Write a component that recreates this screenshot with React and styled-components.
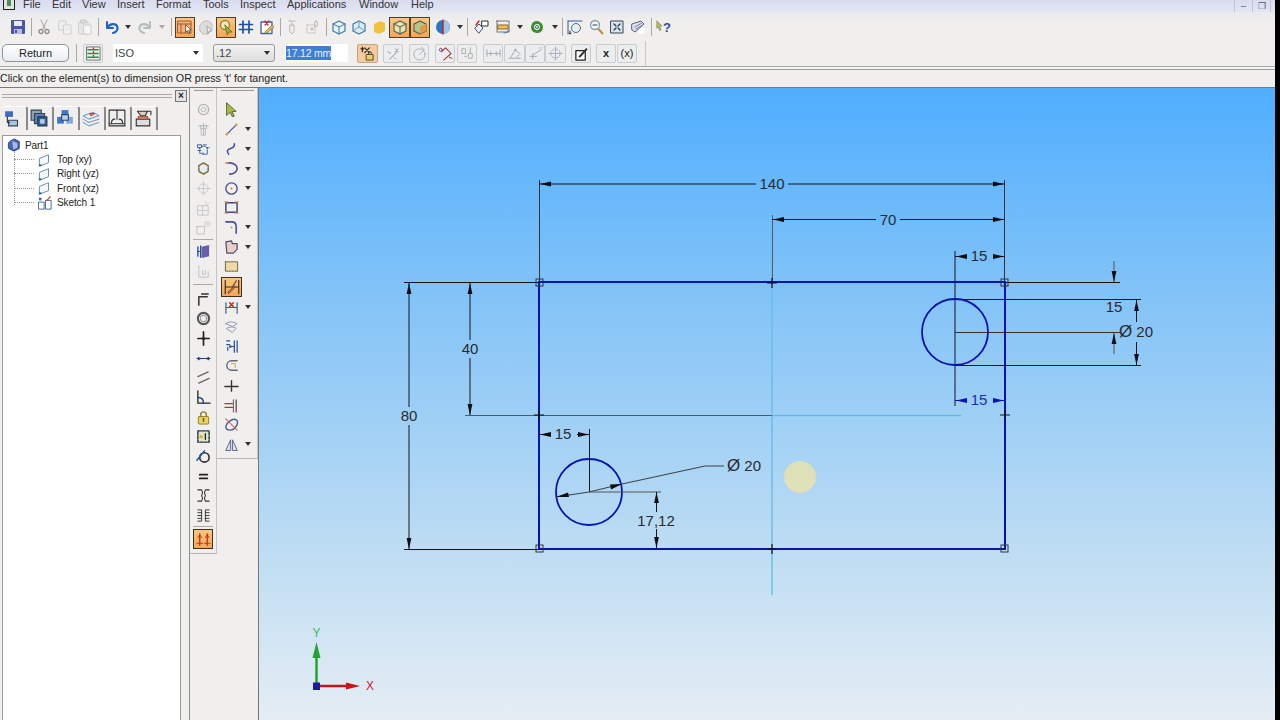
import React from "react";
import styled, { createGlobalStyle } from "styled-components";

const GlobalStyle = createGlobalStyle`
  html, body { margin: 0; padding: 0; background: #000; }
  body { font-family: "Liberation Sans", Arial, sans-serif; overflow: hidden; }
`;

const Icon = ({ children, size = 16 }) => (
  <svg width={size} height={size} viewBox="0 0 16 16" fill="none" strokeLinecap="round" strokeLinejoin="round">
    {children}
  </svg>
);

// toolbar and strip drawings, keyed by name
const G = {
  save: <><rect x="1" y="1" width="14" height="14" rx="1" fill="#4b55a8" /><rect x="4" y="2" width="8" height="5" fill="#e8e8f2" /><rect x="4" y="10" width="8" height="5" fill="#b9bddb" /><rect x="5" y="11" width="2" height="3" fill="#4b55a8" /></>,
  cut: <><path d="M5 1l4 9M11 1L7 10" stroke="#a5a5a5" /><circle cx="5" cy="12.5" r="2" stroke="#8f8f8f" strokeWidth="1.3" /><circle cx="11" cy="12.5" r="2" stroke="#8f8f8f" strokeWidth="1.3" /></>,
  copy: <><path d="M2 2h7v9H2z" fill="#eee" stroke="#d0d0d0" /><path d="M7 6h7v9H7z" fill="#f3f3f3" stroke="#cfcfcf" /><path d="M9 9h3M9 11h3" stroke="#ddd" /></>,
  paste: <><rect x="2" y="3" width="9" height="12" fill="#e6e6e6" stroke="#cfcfcf" /><rect x="7" y="6" width="7" height="9" fill="#f6f6f6" stroke="#cfcfcf" /><rect x="4" y="1" width="5" height="3" fill="#ddd" stroke="#c8c8c8" /></>,
  undo: <><path d="M3 3v6h6" stroke="#1f63c8" strokeWidth="2" /><path d="M3.5 8.5C6 4 13 4 13.5 9c.2 2.5-2 4.5-4.5 5" stroke="#1f63c8" strokeWidth="2.2" /></>,
  redo: <><path d="M13 3v6H7" stroke="#b7bdbf" strokeWidth="2" /><path d="M12.5 8.5C10 4 3 4 2.5 9c-.2 2.5 2 4.5 4.5 5" stroke="#b7bdbf" strokeWidth="2.2" /></>,
  selFace: <><rect x="1" y="2" width="13" height="12" fill="#f6b27a" stroke="#a3562c" /><path d="M1 5h13M4 5v9" stroke="#a3562c" /><path d="M9 6l5 5-2.4.2 1.2 3-1.3.5-1.2-3L9 13z" fill="#fff" stroke="#333" strokeWidth=".7" /></>,
  selGhost: <><path d="M2 6l4-4h5l3 3v6l-4 4H5l-3-3z" fill="#ddd" stroke="#bbb" /><path d="M9 7l5 5-3 .2-1 2.5z" fill="#eee" stroke="#aaa" /></>,
  selPick: <><circle cx="7" cy="6" r="4.5" fill="#f7e5b5" stroke="#8c8a3a" strokeWidth="1.4" /><path d="M7 6l7 7-3.3.2-1.2 2.4z" fill="#9aae3c" stroke="#4f5f20" strokeWidth=".7" /></>,
  hash: <path d="M5 2v12M11 2v12M1.5 5.5h13M1.5 10.5h13" stroke="#1d4fa8" strokeWidth="1.7" />,
  sketch: <><rect x="2" y="3" width="11" height="11.5" fill="#fff" stroke="#3d5fb0" strokeWidth="1.3" /><path d="M6 2l3 4M10 2L6 6" stroke="#c62828" strokeWidth="1.3" /><path d="M6 13l7-7 2 2-7 6z" fill="#e8b050" stroke="#8d6a2a" strokeWidth=".6" /></>,
  faintA: <><path d="M7 2v4M5 6h4v7l-2 2-2-2z" stroke="#b8b8b8" /><path d="M4 2h2M9 2h1" stroke="#aaa" /></>,
  faintB: <><rect x="2" y="6" width="8" height="8" stroke="#c4c4c4" strokeDasharray="2 1" /><circle cx="7" cy="10" r="1.4" fill="#bbb" /><path d="M11 2c2 0 2 6 0 6s-2-6 0-6z" stroke="#b0b0b0" /></>,
  cubeA: <><path d="M2 5l6-3 6 3v7l-6 3-6-3z" fill="#e9f3fa" stroke="#3c7ba8" strokeWidth="1.2" /><path d="M2 5l6 3 6-3M8 8v7" stroke="#3c7ba8" /></>,
  cubeB: <><path d="M2 5l6-3 6 3v7l-6 3-6-3z" fill="#dcecf7" stroke="#3c7ba8" strokeWidth="1.2" /><path d="M8 8V2M8 8l6 4M8 8l-6 4" stroke="#6b9fc4" /></>,
  cubeY: <path d="M3 5l6-3 5 2v8l-6 3-5-2z" fill="#f2c23c" />,
  cubeC: <><path d="M2 5l6-3 6 3v7l-6 3-6-3z" fill="#e9e6a8" stroke="#4d5a5a" strokeWidth="1.1" /><path d="M2 5l6 3 6-3M8 8v7" stroke="#4d5a5a" /></>,
  cubeD: <><path d="M2 5l6-3 6 3v7l-6 3-6-3z" fill="#b7c48a" stroke="#4d5a5a" strokeWidth="1.1" /><path d="M8 8l6-3v7l-6 3z" fill="#e09a4a" /></>,
  sphere: <><circle cx="8" cy="8" r="7" fill="#2778c4" /><path d="M8 1a7 7 0 0 1 0 14z" fill="#9cc6e8" /><path d="M8 1v14" stroke="#d11919" strokeWidth="1.4" /></>,
  rotate: <><path d="M2 9l4-4 4 4-4 5z" fill="#eef" stroke="#456" /><path d="M9 2h6v5H9z" fill="#fff" stroke="#333" /><path d="M6 2L3 6" stroke="#c22" strokeWidth="1.4" /></>,
  display: <><rect x="2" y="2" width="12" height="11" stroke="#666" strokeDasharray="2 1" /><rect x="3" y="6" width="10" height="4" fill="#e8c060" stroke="#8a6b20" /><path d="M9 14c3 0 4-1 5-3" stroke="#3f7fc0" strokeWidth="1.2" /></>,
  spin: <><circle cx="8" cy="8" r="4.5" stroke="#3e8e2c" strokeWidth="3" strokeDasharray="6 2" /><circle cx="8" cy="8" r="1.5" fill="#fff" stroke="#276" /></>,
  zoomBox: <><path d="M1 2h14M1 2v13" stroke="#2f5fa0" /><circle cx="9" cy="9" r="4.5" fill="#dff0f8" stroke="#666" /><path d="M3 12v3M2 14l1 1 1-1" stroke="#333" /></>,
  zoomGlass: <><circle cx="7" cy="6" r="4.5" fill="#eaf6fb" stroke="#7f9db3" strokeWidth="1.3" /><path d="M5 6h4" stroke="#444" /><path d="M10.5 10l4 4.5" stroke="#c08a40" strokeWidth="2" /></>,
  fit: <><rect x="2" y="2" width="12" height="12" fill="#dbe7ef" stroke="#345" /><path d="M5 5l2 2M11 5L9 7M5 11l2-2M11 11L9 9" stroke="#234" strokeWidth="1.2" /></>,
  views: <><path d="M2 5l9-3 3 3-9 8-3-2z" fill="#dde" stroke="#567" /><path d="M5 8l7-4M6 10l7-4" stroke="#789" /><circle cx="12" cy="12" r="3" fill="#fff" /></>,
  help: <><path d="M1 2l5 5-2.5.3L5 11 3.5 11.5 2.5 8 1 9z" fill="#b8c440" stroke="#566" strokeWidth=".5" /><text x="7" y="13" fontFamily="Liberation Sans" fontWeight="700" fontSize="13" fill="#2a50a0">?</text></>,
  grid: <><rect x="1" y="1" width="14" height="14" fill="#f2f2ea" stroke="#667" /><path d="M2 4h12M2 8h12M2 12h12" stroke="#2f8a4a" strokeDasharray="3 1" strokeWidth="1.5" /><path d="M8 2v12" stroke="#c23" strokeDasharray="1 3" strokeWidth="1.5" /></>,
  lockDim: <><path d="M1 3h3M2.5 1v5M5 2l5 5M10 2L5 7" stroke="#222" strokeWidth="1.2" /><rect x="7" y="9" width="7" height="6" fill="#e8d36a" stroke="#444" /><path d="M9 9V7.5a1.5 1.5 0 0 1 3 0V9" stroke="#444" /></>,
  bdA: <><path d="M2 6l3 2M4 14l8-8M10 3l3 3M13 3l-3 3" stroke="#aab" strokeWidth="1.1" /><path d="M8 12l3 2" stroke="#bbb" /></>,
  bdB: <><circle cx="8" cy="9" r="6" stroke="#a8aeb0" /><path d="M8 9l5-5M10 1l3 3" stroke="#a8aeb0" /></>,
  bdC: <><circle cx="3" cy="4" r="1.6" stroke="#7a4a90" /><path d="M4 6l4-4 6 6-8 7" stroke="#a33" strokeWidth="1.1" /><path d="M12 12l3 1" stroke="#555" /></>,
  bdD: <><path d="M2 3h4v5H2zM9 8h4v5H9zM5 11h3M11 2v5" stroke="#a5a9aa" strokeDasharray="2 1" /></>,
  bdE: <><path d="M1 4v7M15 4v7M1 8h14M5 6v4M11 6v4" stroke="#a7adaf" /></>,
  bdF: <><path d="M2 13h12M4 12l5-8 5 5" stroke="#9aa" /><circle cx="9" cy="4" r="1" fill="#899" /><path d="M10 11l3-1" stroke="#bbb" /></>,
  bdG: <><path d="M2 11h7M5 8v6M6 9l8-5" stroke="#a5aaab" /><path d="M12 2h3" stroke="#bbb" /></>,
  bdH: <><circle cx="8" cy="8" r="5" stroke="#aab" strokeDasharray="3 1.5" /><path d="M8 1v14M1 8h14" stroke="#aab" /></>,
  edit: <><rect x="2" y="5" width="10" height="10" fill="#fff" stroke="#222" strokeWidth="1.3" /><path d="M5 11l8-9 1.5 1.5L7 12H5z" fill="#333" /></>,
  target: <><circle cx="8" cy="8" r="5.5" stroke="#b4b4b4" strokeWidth="1.4" /><circle cx="8" cy="8" r="2.4" stroke="#b4b4b4" /></>,
  strutFaint: <><path d="M3 4h10M8 2v12M5 4v3M11 4v3" stroke="#a9b4b6" /><rect x="6" y="7" width="4" height="7" stroke="#bbb" /></>,
  pattern: <><rect x="2" y="3" width="4" height="3" stroke="#2b5aa0" /><path d="M2 9h3M5 12h3M8 3h3M11 6h3M6 4.5h5M4 6v6M12 6v7M11 13H7" stroke="#2b5aa0" strokeDasharray="1.6 1" /></>,
  polyFaint: <><path d="M8 2l5 3v6l-5 3-5-3V5z" fill="#e4ecf0" stroke="#7d6c3c" strokeDasharray="3 1" strokeWidth="1.6" /></>,
  crossFaint: <><circle cx="8" cy="8" r="5" stroke="#c6cacc" /><path d="M8 1v14M1 8h14" stroke="#c6cacc" /></>,
  gridFaint: <><path d="M2 5h11v10H2zM7 5v10M2 10h11" stroke="#c8c8c8" /><path d="M10 1l2 3M14 2l-2 2" stroke="#d0d0d0" /></>,
  dashFaint: <><rect x="1" y="7" width="8" height="8" stroke="#c0c0c0" strokeDasharray="2 1" /><rect x="9" y="1" width="6" height="6" fill="#dedede" /></>,
  extrude: <><path d="M2 3v10M5 2v12" stroke="#1e4aa0" strokeWidth="1.4" /><path d="M6 3l8-2v12l-8 2z" fill="#6a5fa8" /><path d="M2 7l3 1-3 1z" fill="#1e4aa0" /></>,
  hFaint: <><path d="M3 2v12h10V8M7 7v4h3V7" stroke="#bcc2c4" /></>,
  corner: <path d="M3 14V5h9M6 2h7" stroke="#333" strokeWidth="1.6" />,
  ring: <><circle cx="8" cy="8" r="6" stroke="#555" strokeWidth="2.2" /><circle cx="8" cy="8" r="3.5" fill="#f0efed" stroke="#888" /></>,
  plus: <><path d="M8 1v14M2 8h12" stroke="#222" strokeWidth="1.8" /><path d="M6 7h4v2H6z" fill="#222" /></>,
  mid: <><path d="M1 8h14" stroke="#1d3f80" strokeWidth="1.2" /><path d="M2 6l4 2-4 2zM14 6l-4 2 4 2z" fill="#1d3f80" /></>,
  slash: <path d="M2 7L13 2M3 14l11-5" stroke="#666" strokeWidth="1.4" />,
  angleTool: <><path d="M2 1v13h13" stroke="#222" strokeWidth="1.4" /><path d="M2 8c4 0 6 2 6 6" stroke="#1d3f80" strokeWidth="1.4" /></>,
  lock: <><rect x="2.5" y="7" width="11" height="8" rx="1" fill="#e9d35a" stroke="#8c7a28" /><path d="M5 7V5a3 3 0 0 1 6 0v2" stroke="#8c7a28" strokeWidth="1.5" /><path d="M8 9v3" stroke="#553" strokeWidth="1.5" /></>,
  dimSquare: <><rect x="2" y="2" width="12" height="12" fill="#dfe8c8" stroke="#234" strokeDasharray="3 1.4" strokeWidth="1.5" /><circle cx="5.5" cy="8" r="2" fill="#d8b840" /><path d="M10 5v6" stroke="#222" strokeWidth="1.4" /></>,
  tangent: <><circle cx="9" cy="9" r="5" stroke="#333" strokeWidth="1.8" /><path d="M1 12L9 2" stroke="#1d5aa0" strokeWidth="1.6" /></>,
  equal: <path d="M4 6h8M4 10h8" stroke="#222" strokeWidth="2" />,
  mirrorA: <><path d="M2 2h4l1 3-1 3 1 3-1 3H2M14 2h-4L9 5l1 3-1 3 1 3h4" stroke="#333" strokeWidth="1.1" /></>,
  mirrorB: <><path d="M2 2h4v12H2M14 2h-4v12h4M2 5h4M2 8h4M2 11h4M10 5h4M10 8h4M10 11h4" stroke="#333" strokeWidth="1" /></>,
  dimActive: <><path d="M4 2v12M12 2v12" stroke="#b5341d" strokeWidth="1.4" /><path d="M1 12h6M9 12h6M2 6l2-3 2 3M10 6l2-3 2 3" stroke="#b5341d" /></>,
  pointer: <path d="M3 1l10 9-4.5.4L11 15l-2 1-2.4-5L3 14z" fill="#a8bb3c" stroke="#3b4a20" strokeWidth=".8" />,
  line: <><path d="M3 13L13 3" stroke="#4a5396" strokeWidth="1.3" /><circle cx="3" cy="13" r="1.5" fill="#d9a04c" /><circle cx="13" cy="3" r="1.5" fill="#d9a04c" /></>,
  spline: <path d="M5 14c-3-3-1-5 2-6s5-2 4-5" stroke="#4a5396" strokeWidth="1.7" />,
  arc: <><path d="M3 2h3c5 0 8 3 8 6s-3 6-8 6" stroke="#4a5396" strokeWidth="1.7" /><path d="M2 2h2" stroke="#d9a04c" strokeWidth="1.8" /></>,
  circle: <><circle cx="8" cy="8" r="6" stroke="#4a5396" strokeWidth="1.5" /><circle cx="8" cy="8" r="1.1" fill="#b5882e" /></>,
  rect: <><rect x="2" y="3" width="12" height="10" stroke="#3a4488" strokeWidth="1.5" /><path d="M1 2h3M12 2h3M1 14h3M12 14h3" stroke="#d9a04c" strokeWidth="1.5" /></>,
  fillet: <><path d="M2 2h6c3 0 5 2 5 5v7" stroke="#4a5396" strokeWidth="1.7" /><circle cx="8" cy="8" r="1" fill="#c8963a" /></>,
  profile: <><path d="M2 3l6-1 1 3h5v6l-4 4H3z" fill="#e8cfc8" stroke="#5a4a70" strokeWidth="1.3" /></>,
  hatch: <rect x="1.5" y="3" width="13" height="10" fill="#eed9a8" stroke="#6a5a30" strokeDasharray="2 1" />,
  dimCons: <><path d="M2 2v12M14 2v12M2 8h12" stroke="#2a2a2a" /><path d="M4 13l5-5-1 0 4-6-3 6 2 0-6 6" fill="#b73" stroke="#643" strokeWidth=".7" /></>,
  dimTrim: <><path d="M2 3v11M14 3v11M2 8h12" stroke="#2b5aa0" strokeDasharray="2 1" strokeWidth="1.3" /><path d="M6 3l4 4M10 3L6 7" stroke="#c22" strokeWidth="1.5" /></>,
  curveFaint: <><path d="M2 5c3-3 9-2 12 0L9 8 2 5zM3 10c3-2 7-2 10 0l-4 4z" stroke="#8a90b4" /></>,
  offset: <><path d="M3 2h3M3 6h3M4 12v-3M11 2v12M14 2v12M10 8H6" stroke="#1f4ea5" strokeWidth="1.3" /><path d="M6 6l3 2-3 2z" fill="#1f4ea5" /></>,
  trim: <><path d="M14 3H8a5 5 0 0 0 0 10h6" stroke="#667" strokeWidth="1.5" /><path d="M8 6h4v4" stroke="#c9a040" /></>,
  split: <path d="M1 9h14M8 3v5M8 10v4" stroke="#333" strokeWidth="1.5" />,
  extend: <><path d="M13 2v13" stroke="#a35050" strokeWidth="1.6" /><path d="M10 2v13" stroke="#556" /><path d="M1 6h8M1 10h8" stroke="#b63232" strokeDasharray="2 1" strokeWidth="1.3" /></>,
  noLink: <><path d="M2 11c0-5 7-10 11-8s-1 11-6 11-5-2-5-3z" stroke="#4a5a96" strokeWidth="1.5" /><path d="M2 2l12 12" stroke="#d06060" strokeWidth="1.2" /></>,
  mirror: <><path d="M2 14L7 3v11zM14 14L9 3v11z" fill="#dde1ee" stroke="#5a6488" /></>,
  treeA: <><rect x="1" y="2" width="7" height="5" fill="#3c6cc0" /><rect x="4" y="10" width="8" height="5" fill="#a7c4e0" stroke="#345" /><path d="M3 7v5h2" stroke="#333" /></>,
  treeB: <><rect x="1" y="1" width="9" height="9" fill="#8ea2b8" stroke="#345" /><rect x="4" y="4" width="9" height="9" fill="#5e7fb0" stroke="#345" /><rect x="7" y="7" width="8" height="8" fill="#2f60a8" stroke="#234" /><rect x="9" y="9" width="4" height="4" fill="#bcd" /></>,
  treeC: <><rect x="5" y="1" width="6" height="5" fill="#3a78c8" /><rect x="1" y="7" width="6" height="6" fill="#3a78c8" /><rect x="9" y="7" width="6" height="6" fill="#85a8d8" /><rect x="5" y="5" width="6" height="5" fill="#b9d0ea" stroke="#347" /></>,
  treeD: <><path d="M1 6l9-3 5 3-9 3z" fill="#e8eef4" stroke="#7aa4c8" /><path d="M1 9l5 3 9-3M1 12l5 3 9-3" stroke="#7aa4c8" /><path d="M7 4l4 0-3 2z" stroke="#cc3a3a" /></>,
  treeE: <><rect x="1" y="1" width="14" height="14" fill="#eee" stroke="#333" /><path d="M8 1v8M3 13c0-3 1-4 3-4M13 13c0-3-1-4-3-4" stroke="#333" /><path d="M1 13h14" stroke="#555" /></>,
  treeF: <><path d="M3 2h9l-2 4H6z" fill="#d8cfc0" stroke="#333" /><path d="M2 9h12v6H2z" fill="#ddd" stroke="#333" /><path d="M4 9V7h8v2" stroke="#b53" strokeWidth="1.4" /><path d="M12 2h3v3" stroke="#333" /></>,
  part: <><path d="M2 5l6-4 6 3v8l-6 3-6-3z" fill="#4464b8" stroke="#243a80" /><path d="M6 3l6 3v5l-5 2z" fill="#a5b8e0" /></>,
  plane: <><path d="M2 6l10-4v9L2 15z" fill="#f6fafc" stroke="#5a82a0" /><rect x="1" y="13" width="3" height="2" fill="#2f6090" /></>,
  sketchNode: <><rect x="1" y="7" width="6" height="8" stroke="#345a88" /><rect x="9" y="5" width="6" height="10" stroke="#345a88" /><rect x="1" y="2" width="3" height="3" fill="#3a6aa0" /><path d="M10 5l4-4" stroke="#c03a2a" strokeWidth="1.4" /></>,
};

const Screen = styled.div`
  display: flex;
  width: 1280px;
  height: 720px;
  overflow: hidden;
`;

const AppWindow = styled.div`
  width: 1275px;
  display: flex;
  flex-direction: column;
  background: #f0efed;
`;

const MenuBar = styled.div`
  height: 12px;
  display: flex;
  align-items: flex-start;
  background: linear-gradient(#d9dcef, #e4e5f2);
  overflow: hidden;
`;

const AppLogo = styled.div`
  width: 10px;
  height: 9px;
  margin: 0 8px 0 3px;
  flex: none;
  border: 1px solid #222;
  border-top: none;
  background: #dfe8d8;
  display: flex;
  justify-content: center;
  &::after {
    content: "";
    width: 4px;
    height: 6px;
    background: #4f8a62;
  }
`;

const MenuItem = styled.span`
  width: ${p => p.$w}px;
  flex: none;
  font-size: 11px;
  line-height: 11px;
  margin-top: -1px;
  color: #333;
`;

const WindowButtons = styled.div`
  margin-left: auto;
  display: flex;
  height: 12px;
`;

const WindowButton = styled.div`
  width: ${p => p.$w || 18}px;
  box-sizing: border-box;
  border-left: 1px solid #bfc4d8;
  display: flex;
  align-items: center;
  justify-content: center;
  color: #556;
  font-size: 9px;
`;

const ToolbarOne = styled.div`
  height: 28px;
  box-sizing: border-box;
  padding: 2px 0 0 8px;
  display: flex;
  align-items: center;
  background: linear-gradient(#e9e9ee, #f0efed 30%);
`;

const Tool = styled.div`
  width: ${p => p.$w || 20}px;
  height: 21px;
  flex: none;
  display: flex;
  align-items: center;
  justify-content: center;
  box-sizing: border-box;
  ${p => p.$active && `
    background: linear-gradient(#fdc781, #f6a552);
    border: 1px solid #4a4030;
  `}
`;

const Caret = styled.i`
  display: block;
  width: 0;
  height: 0;
  border-left: 3.5px solid transparent;
  border-right: 3.5px solid transparent;
  border-top: 4px solid ${p => p.$faint ? "#aaa" : "#333"};
`;

const ToolCaret = styled.div`
  width: ${p => p.$w || 12}px;
  margin-left: ${p => p.$ml || 0}px;
  flex: none;
  display: flex;
  justify-content: center;
`;

const BarSep = styled.div`
  width: ${p => p.$w || 8}px;
  height: 18px;
  flex: none;
  display: flex;
  justify-content: center;
  &::before {
    content: "";
    width: 1px;
    background: #a8a8a0;
  }
`;

const ToolbarTwo = styled.div`
  height: 26px;
  display: flex;
  align-items: center;
  padding-left: 2px;
  border-bottom: 1px solid #a8a8a8;
  box-shadow: 0 2px 0 #f4f4f2, 0 3px 0 #9c9c9c;
`;

const ReturnButton = styled.div`
  width: 67px;
  height: 18px;
  margin-right: 3px;
  border: 1px solid #8f9499;
  border-radius: 5px;
  box-sizing: border-box;
  background: linear-gradient(#ffffff, #e8ecf2);
  font-size: 11px;
  line-height: 16px;
  text-align: center;
  color: #222;
`;

const SquareButton = styled.div`
  width: ${p => p.$w || 20}px;
  height: 19px;
  margin-left: ${p => p.$gap || 0}px;
  flex: none;
  box-sizing: border-box;
  border: 1px solid ${p => p.$active ? "#b8a890" : "#c8cccc"};
  border-radius: 2px;
  background: ${p => p.$active ? "#f8c99a" : "#ebedee"};
  display: flex;
  align-items: center;
  justify-content: center;
  color: #222;
  font-size: 11px;
`;

const Select = styled.div`
  width: ${p => p.$w}px;
  height: 18px;
  margin-left: ${p => p.$gap}px;
  flex: none;
  box-sizing: border-box;
  display: flex;
  align-items: center;
  justify-content: space-between;
  padding: 0 4px 0 2px;
  font-size: 11px;
  color: #444;
  background: ${p => p.$grey ? "linear-gradient(#f2f2f2, #dedede)" : "#fff"};
  border: ${p => p.$grey ? "1px solid #999" : "none"};
  border-radius: ${p => p.$grey ? "3px" : "0"};
`;

const ValueInput = styled.div`
  width: 63px;
  height: 18px;
  margin-left: 10px;
  flex: none;
  background: #fff;
  display: flex;
  align-items: center;
  padding-left: 1px;
  box-sizing: border-box;
`;

const SelectedText = styled.span`
  background: #3f7fd4;
  color: #e6f0fb;
  font-size: 10.5px;
  line-height: 14px;
  letter-spacing: -0.2px;
  white-space: nowrap;
`;

const EndRule = styled.div`
  width: 1px;
  height: 25px;
  margin-left: 8px;
  background: #c8c8c4;
`;

const StatusBar = styled.div`
  height: 18px;
  margin-top: 2px;
  font-size: 10.7px;
  line-height: 18px;
  color: #222;
  white-space: nowrap;
  border-bottom: 1px solid #7a7a7a;
`;

const Workspace = styled.div`
  flex: 1;
  display: flex;
  min-height: 0;
`;

const SidePanel = styled.div`
  width: 190px;
  flex: none;
  box-sizing: border-box;
  padding: 2px 0 0 2px;
  display: flex;
  flex-direction: column;
  border-right: 1px solid #8e8e8e;
`;

const PanelGrip = styled.div`
  height: 11px;
  display: flex;
  align-items: center;
  gap: 3px;
  padding-right: 2px;
  &::before {
    content: "";
    flex: 1;
    height: 2px;
    border-top: 1px solid #a9a9a9;
    border-bottom: 1px solid #a9a9a9;
  }
`;

const CloseBox = styled.div`
  width: 10px;
  height: 10px;
  border: 1px solid #777;
  font-size: 10px;
  line-height: 9px;
  text-align: center;
  font-weight: 700;
  color: #222;
  background: #e4e4e4;
`;

const Tabs = styled.div`
  height: 29px;
  margin: 2px 0 3px;
  display: flex;
  align-items: center;
`;

const Tab = styled.div`
  width: 26px;
  height: 24px;
  box-sizing: border-box;
  display: flex;
  align-items: center;
  justify-content: center;
  padding-right: 3px;
  border-right: 2px solid #8a8a8a;
  border-top: 1px solid #fff;
  border-radius: 3px 3px 0 0;
`;

const TreeBox = styled.div`
  flex: 1;
  width: 179px;
  box-sizing: border-box;
  background: #fff;
  border: 1px solid #9a9a9a;
  border-bottom: none;
  padding-top: 2px;
`;

const TreeRow = styled.div`
  height: 14.4px;
  display: flex;
  align-items: center;
  padding-left: ${p => p.$indent}px;
  font-size: 10px;
  letter-spacing: -0.1px;
  color: #222;
  gap: 4px;
`;

const TreeLeaf = styled(TreeRow)`
  gap: 0;
  &::before {
    content: "";
    width: 20px;
    margin-right: 4px;
    border-bottom: 1px dotted #999;
  }
  svg { margin-right: 5px; }
`;

const TreeChildren = styled.div`
  margin-left: 11px;
  background: repeating-linear-gradient(#999 0 1px, transparent 1px 2px) left top / 1px 92% no-repeat;
`;

const Strip = styled.div`
  flex: none;
  width: ${p => p.$w}px;
  box-sizing: border-box;
  align-self: flex-start;
  height: ${p => p.$h}px;
  display: flex;
  flex-direction: column;
  align-items: ${p => p.$left ? "flex-start" : "center"};
  padding-top: ${p => p.$top}px;
  border-right: 1px solid #c4c4c4;
  border-bottom: 1px solid #b5b5b5;
`;

const StripWrap = styled.div`
  position: relative;
  display: flex;
  height: 100%;
  border-right: ${p => p.$edge ? `1px solid ${p.$edge}` : "none"};
  &::before {
    content: "";
    position: absolute;
    top: 2px;
    left: 4px;
    right: 4px;
    height: 1px;
    background: #999;
  }
`;

const StripTool = styled.div`
  width: ${p => p.$w || 20}px;
  height: ${p => p.$h || 20}px;
  margin-left: ${p => p.$ml || 0}px;
  flex: none;
  display: flex;
  align-items: center;
  justify-content: center;
  box-sizing: border-box;
  ${p => p.$active && `
    background: linear-gradient(#fdc781, #f6a552);
    outline: 1px solid #3a3020;
    outline-offset: -1px;
  `}
`;

const StripRow = styled.div`
  display: flex;
  align-items: center;
  height: ${p => p.$h || 19.7}px;
  flex: none;
`;

const StripSep = styled.div`
  width: 20px;
  height: 1px;
  margin: ${p => p.$m || "5px 0"};
  background: #aaa;
  flex: none;
`;

const Canvas = styled.div`
  flex: 1;
  background: linear-gradient(#50aefe 0%, #84c4f7 34%, #bcdcf3 72%, #e5edf4 100%);
  svg { display: block; }
  text { font-family: "Liberation Sans", Arial, sans-serif; }
`;

const FirstBar = [
  ["save", 20], ["|", 6], ["cut", 20], ["copy", 21], ["paste", 20], ["|", 6], ["undo", 21], ["v", 12], ["redo", 22], ["vf", 12], ["|", 7],
  ["selFace", 20, 1], ["selGhost", 21], ["selPick", 20, 1], ["hash", 20], ["sketch", 21], ["|", 6], ["faintA", 20], ["faintB", 20], ["|", 6],
  ["cubeA", 20], ["cubeB", 20], ["cubeY", 20], ["cubeC", 21, 1], ["cubeD", 20, 1], ["sphere", 26], ["v", 8], ["|", 7],
  ["rotate", 20], ["display", 23], ["v", 11], ["spin", 24], ["v", 11], ["|", 4], ["zoomBox", 21], ["zoomGlass", 21], ["fit", 21], ["views", 21], ["|", 6], ["help", 20],
];

const SecondBar = [
  ["lockDim", 21, 9, true], ["bdA", 20, 5], ["bdB", 20, 6], ["bdC", 20, 6], ["bdD", 20, 2], ["bdE", 20, 6], ["bdF", 21, 1], ["bdG", 20, 0], ["bdH", 21, 0], ["edit", 20, 5],
];

const LeftStrip = [
  ["target"], ["strutFaint"], ["pattern"], ["polyFaint"], ["crossFaint"], ["gridFaint"], ["dashFaint"], "-",
  ["extrude"], ["hFaint"], "=",
  ["corner"], ["ring"], ["plus"], ["mid"], ["slash"], ["angleTool"], ["lock"], ["dimSquare"], ["tangent"], ["equal"], ["mirrorA"], ["mirrorB"],
];

const RightStrip = [
  ["pointer"], ["line", 1], ["spline", 1], ["arc", 1], ["circle", 1], ["rect"], ["fillet", 1], ["profile", 1], ["hatch"],
  ["dimCons", 0, 1], ["dimTrim", 1], ["curveFaint"], ["offset"], ["trim"], ["split"], ["extend"], ["noLink"], ["mirror", 1],
];

const BLUE = "#0b12b4";
const INK = "#15151c";
const ARROW = "#0d0d14";

// solid arrow head, tip at x,y pointing along dir
const Head = ({ x, y, dir, c = ARROW, len = 11 }) => {
  const d = { l: [1, 0], r: [-1, 0], u: [0, 1], d: [0, -1] }[dir];
  const bx = x + d[0] * len;
  const by = y + d[1] * len;
  const nx = d[1] * 2.4;
  const ny = d[0] * 2.4;
  return <polygon points={`${x},${y} ${bx + nx},${by + ny} ${bx - nx},${by - ny}`} fill={c} />;
};

const Label = ({ x, y, c = "#2a2a30", size = 15, children }) => (
  <text x={x} y={y - 1} fill={c} fontSize={size} textAnchor="middle" dominantBaseline="central">{children}</text>
);

const Seg = ({ p, c = INK, w = 1 }) => <path d={p} stroke={c} strokeWidth={w} fill="none" />;

const Corner = ({ x, y }) => <rect x={x - 3.5} y={y - 3.5} width={7} height={7} fill="none" stroke="#333" strokeWidth="1" />;
const Cross = ({ x, y }) => <path d={`M${x - 5} ${y}h10M${x} ${y - 5}v10`} stroke="#111" strokeWidth="1.2" />;

const Drawing = () => (
  <svg width="1016" height="632" viewBox="259 88 1016 632">
    {/* construction lines */}
    <Seg p="M772 220V595" c="#69bce8" w="1.4" />
    <Seg p="M772 415.5H961" c="#69b6e6" w="1.4" />
    <Seg p="M465 415.5H772" c="#4d5a66" w="1.2" />

    {/* extension lines */}
    <Seg p="M404 282.5H539M1005 282.5H1120M404 549.5H539" />
    <Seg p="M539.5 180V282M1004.5 180V282" c="#333" />
    <Seg p="M772.5 215V282" c="#4d5d6d" />
    <Seg p="M955 251V406" c="#12122a" />
    <Seg p="M955 299.5H1141M955 365.5H1141" />
    <Seg p="M955 332.5H1120" c="#333" />

    {/* sketch rectangle and circles */}
    <rect x="539" y="282" width="466" height="267" fill="none" stroke={BLUE} strokeWidth="2" />
    <circle cx="955" cy="332" r="33" fill="none" stroke={BLUE} strokeWidth="1.8" />
    <circle cx="589" cy="492" r="33" fill="none" stroke={BLUE} strokeWidth="1.8" />
    <Corner x={539.5} y={282.5} /><Corner x={1004.5} y={282.5} /><Corner x={539.5} y={548.5} /><Corner x={1004.5} y={548.5} />
    <Cross x={772} y={283} /><Cross x={539} y={415} /><Cross x={1005} y={415} /><Cross x={772} y={549} />

    {/* 140 */}
    <Seg p="M539 184H756M788 184H1005" />
    <Head x={540} y={184} dir="l" /><Head x={1004} y={184} dir="r" />
    <Label x={772} y={184}>140</Label>

    {/* 70 */}
    <Seg p="M772 219.5H876M900 219.5H1005" />
    <Head x={773} y={219.5} dir="l" /><Head x={1004} y={219.5} dir="r" />
    <Label x={888} y={220}>70</Label>

    {/* 15 top right */}
    <Seg p="M955 256.5H967M993 256.5H1005" />
    <Head x={956} y={256.5} dir="l" /><Head x={1004} y={256.5} dir="r" />
    <Label x={979} y={256}>15</Label>

    {/* 15 blue */}
    <Seg p="M955 400.5H967M993 400.5H1005" c={BLUE} />
    <Head x={956} y={400.5} dir="l" c={BLUE} /><Head x={1004} y={400.5} dir="r" c={BLUE} />
    <Label x={979} y={400} c="#1c2fb0">15</Label>

    {/* 15 vertical, right side */}
    <Seg p="M1114 261V282M1114 333V354" c="#555" />
    <Head x={1114} y={282} dir="d" /><Head x={1114} y={333} dir="u" />
    <Label x={1114} y={307}>15</Label>

    {/* diameter 20, right side */}
    <Seg p="M1136.5 299V322M1136.5 342V365" />
    <Head x={1136.5} y={300} dir="u" /><Head x={1136.5} y={365} dir="d" />
    <Label x={1136} y={332}><tspan fontSize="17">Ø</tspan> 20</Label>

    {/* left circle dims */}
    <Seg p="M589.5 429V492" />
    <Seg p="M539 434.5H551M577 434.5H589" />
    <Head x={540} y={434.5} dir="l" /><Head x={589} y={434.5} dir="r" />
    <Label x={563} y={434}>15</Label>

    <path d="M556 497L589 492L622 484L705 466H724" stroke="#3a3f48" strokeWidth="1" fill="none" />
    <polygon points="556,497 568,492.5 569,497" fill={ARROW} />
    <polygon points="622,484 610,484.5 611,489.5" fill={ARROW} />
    <Label x={744} y={466}><tspan fontSize="17">Ø</tspan> 20</Label>

    <Seg p="M589 492H661" c="#555" />
    <Seg p="M656.5 492V512M656.5 529V549" />
    <Head x={656.5} y={492} dir="u" /><Head x={656.5} y={548} dir="d" />
    <Label x={656} y={521}>17,12</Label>

    {/* 40 and 80 */}
    <Seg p="M470 282V340M470 358V415" />
    <Head x={470} y={283} dir="u" /><Head x={470} y={415} dir="d" />
    <Label x={470} y={349}>40</Label>

    <Seg p="M409 282V407M409 425V549" />
    <Head x={409} y={283} dir="u" /><Head x={409} y={549} dir="d" />
    <Label x={409} y={416}>80</Label>

    {/* cursor highlight */}
    <circle cx="800" cy="477" r="16" fill="#e4e1b0" opacity="0.9" />

    {/* axes */}
    <Seg p="M316.5 686V652" c="#1fa52f" w="2.5" />
    <polygon points="316.5,642 320.5,658 312.5,658" fill="#1fa52f" />
    <Seg p="M316 686H350" c="#c81414" w="2.5" />
    <polygon points="360,686 346,682.5 346,689.5" fill="#c81414" />
    <rect x="313" y="682.5" width="7" height="7.5" fill="#1a1e9c" />
    <Label x={316.5} y={634} c="#2fbf55" size={12}>Y</Label>
    <Label x={370} y={687} c="#d02030" size={12}>X</Label>
  </svg>
);

const MENUS = [["File", 29], ["Edit", 30], ["View", 35], ["Insert", 39], ["Format", 47], ["Tools", 37], ["Inspect", 47], ["Applications", 72], ["Window", 52], ["Help", 30]];

export default function App() {
  return (
    <Screen>
      <GlobalStyle />
      <AppWindow>
        <MenuBar>
          <AppLogo />
          {MENUS.map(([name, w]) => <MenuItem key={name} $w={w}>{name}</MenuItem>)}
          <WindowButtons>
            <WindowButton>–</WindowButton>
            <WindowButton>❐</WindowButton>
            <WindowButton $w={5} />
          </WindowButtons>
        </MenuBar>

        <ToolbarOne>
          {FirstBar.map(([name, w, active], i) => {
            if (name === "|") return <BarSep key={i} $w={w} />;
            if (name === "v" || name === "vf") return <ToolCaret key={i} $w={w}><Caret $faint={name === "vf"} /></ToolCaret>;
            return <Tool key={i} $w={w} $active={active}><Icon>{G[name]}</Icon></Tool>;
          })}
        </ToolbarOne>

        <ToolbarTwo>
          <ReturnButton>Return</ReturnButton>
          <BarSep $w={9} />
          <SquareButton $gap={2}><Icon size={15}>{G.grid}</Icon></SquareButton>
          <Select $w={90} $gap={10}>ISO<Caret /></Select>
          <Select $w={62} $gap={10} $grey>.12<Caret /></Select>
          <ValueInput><SelectedText>17.12 mm</SelectedText></ValueInput>
          {SecondBar.map(([name, w, gap, active]) => (
            <SquareButton key={name} $w={w} $gap={gap} $active={active}><Icon size={15}>{G[name]}</Icon></SquareButton>
          ))}
          <SquareButton $gap={5} $w={20}><b>x</b></SquareButton>
          <SquareButton $gap={1} $w={20}>(x)</SquareButton>
          <EndRule />
        </ToolbarTwo>

        <StatusBar>Click on the element(s) to dimension OR press 't' for tangent.</StatusBar>

        <Workspace>
          <SidePanel>
            <PanelGrip><CloseBox>×</CloseBox></PanelGrip>
            <Tabs>
              {["treeA", "treeB", "treeC", "treeD", "treeE", "treeF"].map(t => (
                <Tab key={t}><Icon size={18}>{G[t]}</Icon></Tab>
              ))}
            </Tabs>
            <TreeBox>
              <TreeRow $indent={4}><Icon size={14}>{G.part}</Icon>Part1</TreeRow>
              <TreeChildren>
                <TreeLeaf $indent={0}><Icon size={14}>{G.plane}</Icon>Top (xy)</TreeLeaf>
                <TreeLeaf $indent={0}><Icon size={14}>{G.plane}</Icon>Right (yz)</TreeLeaf>
                <TreeLeaf $indent={0}><Icon size={14}>{G.plane}</Icon>Front (xz)</TreeLeaf>
                <TreeLeaf $indent={0}><Icon size={14}>{G.sketchNode}</Icon>Sketch 1</TreeLeaf>
              </TreeChildren>
            </TreeBox>
          </SidePanel>

          <StripWrap>
            <Strip $w={27} $h={466} $top={12}>
              {LeftStrip.map((item, i) => {
                if (item === "-") return <StripSep key={i} $m="1px 0 2px" />;
                if (item === "=") return <StripSep key={i} $m="3px 0 4px" />;
                return <StripTool key={i} $h={19.7}><Icon size={15}>{G[item[0]]}</Icon></StripTool>;
              })}
              <StripSep $m="1px 0 2px" />
              <StripTool $active $h={20}><Icon size={15}>{G.dimActive}</Icon></StripTool>
            </Strip>
          </StripWrap>

          <StripWrap $edge="#777">
            <Strip $w={41} $h={371} $top={12} $left>
              {RightStrip.map(([name, caret, active]) => (
                <StripRow key={name} $h={active ? 21 : 19.6}>
                  <StripTool $ml={4} $w={active ? 21 : 20} $h={active ? 20 : 19} $active={active}>
                    <Icon size={active ? 18 : 15}>{G[name]}</Icon>
                  </StripTool>
                  {caret ? <ToolCaret $w={8} $ml={3}><Caret /></ToolCaret> : null}
                </StripRow>
              ))}
            </Strip>
          </StripWrap>

          <Canvas><Drawing /></Canvas>
        </Workspace>
      </AppWindow>
    </Screen>
  );
}
